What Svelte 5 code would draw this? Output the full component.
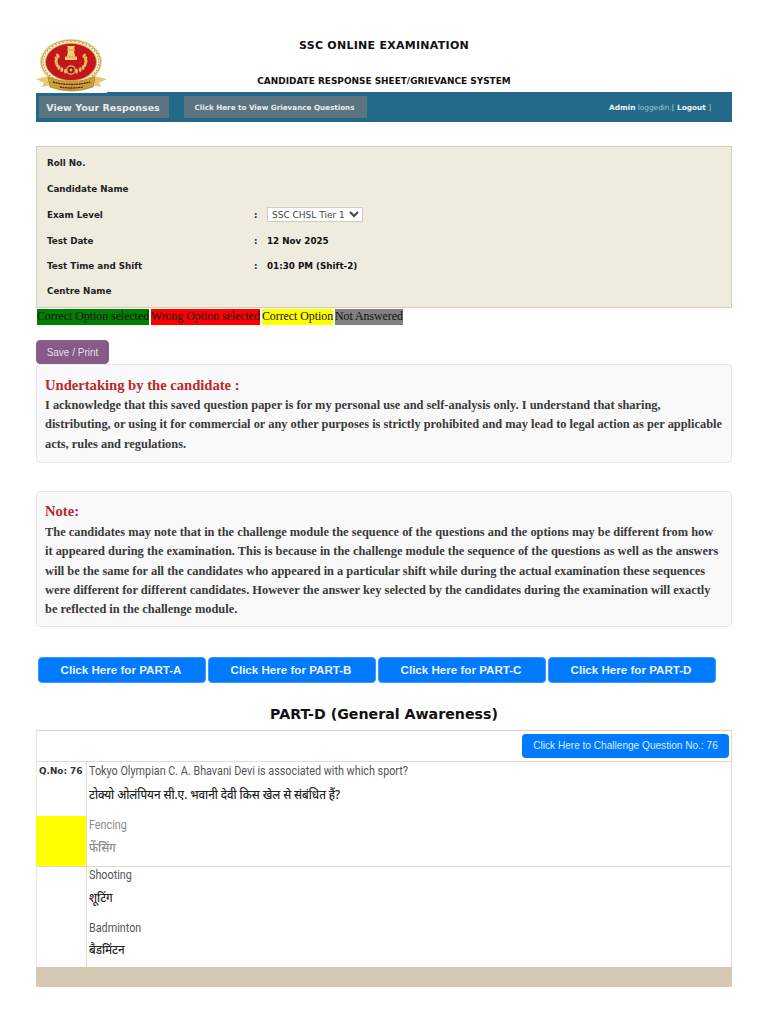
<script>
  const rows = [
    { label: 'Roll No.' },
    { label: 'Candidate Name' },
    { label: 'Exam Level', select: 'SSC CHSL Tier 1' },
    { label: 'Test Date', value: '12 Nov 2025' },
    { label: 'Test Time and Shift', value: '01:30 PM (Shift-2)' },
    { label: 'Centre Name' }
  ];
  const parts = ['A', 'B', 'C', 'D'];
  const dots = Array.from({ length: 44 }, (_, i) => {
    const a = (i / 44) * Math.PI * 2;
    return { x: 35 + Math.cos(a) * 28, y: 24 + Math.sin(a) * 20.5 };
  });
  const leaves = Array.from({ length: 7 }, (_, i) => {
    const a = Math.PI * (0.62 + i * 0.09);
    return { x: Math.cos(a) * 15, y: Math.sin(-a) * -11 };
  });
</script>

<div class="page">
  <header class="head">
    <svg class="logo" viewBox="0 0 71 55" aria-hidden="true">
      <ellipse cx="35" cy="24" rx="31" ry="23" fill="#ecd98f" />
      <ellipse cx="35" cy="24" rx="29.5" ry="21.8" fill="#f4ecc4" stroke="#b58a2c" stroke-width=".7" />
      {#each dots as d}
        <circle cx={d.x} cy={d.y} r=".55" fill="#8a6a24" />
      {/each}
      <ellipse cx="35" cy="24" rx="25.5" ry="18.6" fill="#c5161d" stroke="#d9a93f" stroke-width=".8" />
      <path d="M31 8h8l-1 2 1 2-1 1 1 5 2 1v3H29v-3l2-1 1-5-1-1 1-2z" fill="#f0cf73" />
      <path d="M31 12h8M30 19h10" stroke="#b98a2a" stroke-width=".6" fill="none" />
      {#each leaves as l}
        <ellipse cx={35 + l.x} cy={23 + l.y} rx="1.5" ry="2.4" fill="#e5bd5b" transform="rotate({-20 + l.y * 2} {35 + l.x} {23 + l.y})" />
        <ellipse cx={35 - l.x} cy={23 + l.y} rx="1.5" ry="2.4" fill="#e5bd5b" transform="rotate({20 - l.y * 2} {35 - l.x} {23 + l.y})" />
      {/each}
      <circle cx="35" cy="32" r="4.2" fill="#a5131a" stroke="#e5bd5b" stroke-width="1.2" />
      <circle cx="35" cy="32" r="1.4" fill="#e5bd5b" />
      <path d="M0 41l13-3 3 9-10 2 2-4zM71 41l-13-3-3 9 10 2-2-4z" fill="#e6c873" />
      <path d="M12 39q23 9 47 0l-2 10q-22 8-43 0z" fill="#c99f3c" stroke="#9c7420" stroke-width=".6" />
      <path d="M17 44q18 5 37 0M24 49q11 2 23 0" fill="none" stroke="#5e2417" stroke-width="1.3" stroke-dasharray="2 .6" />
    </svg>
    <h1>SSC ONLINE EXAMINATION</h1>
    <h2>CANDIDATE RESPONSE SHEET/GRIEVANCE SYSTEM</h2>
  </header>

  <nav class="bar">
    <span class="tab big">View Your Responses</span>
    <span class="tab small">Click Here to View Grievance Questions</span>
    <span class="user"><b>Admin</b> loggedin.[ <b>Logout</b> ]</span>
  </nav>

  <section class="info">
    {#each rows as r}
      <div class="row" class:tall={r.select}>
        <span class="lab">{r.label}</span>
        {#if r.select}
          <span class="colon">:</span>
          <select class="sel"><option>{r.select}</option></select>
        {:else if r.value}
          <span class="colon">:</span>
          <span class="val">{r.value}</span>
        {/if}
      </div>
    {/each}
  </section>

  <div class="legend">
    <span class="green">Correct Option selected</span>
    <span class="red">Wrong Option selected</span>
    <span class="yellow">Correct Option</span>
    <span class="grey">Not Answered</span>
  </div>

  <button class="save">Save / Print</button>

  <section class="well first">
    <h3>Undertaking by the candidate :</h3>
    <p>I acknowledge that this saved question paper is for my personal use and self-analysis only. I understand that sharing, distributing, or using it for commercial or any other purposes is strictly prohibited and may lead to legal action as per applicable acts, rules and regulations.</p>
  </section>

  <section class="well second">
    <h3>Note:</h3>
    <p>The candidates may note that in the challenge module the sequence of the questions and the options may be different from how it appeared during the examination. This is because in the challenge module the sequence of the questions as well as the answers will be the same for all the candidates who appeared in a particular shift while during the actual examination these sequences were different for different candidates. However the answer key selected by the candidates during the examination will exactly be reflected in the challenge module.</p>
  </section>

  <div class="parts">
    {#each parts as p}
      <button class="part">Click Here for PART-{p}</button>
    {/each}
  </div>

  <h2 class="title">PART-D (General Awareness)</h2>

  <section class="qtable">
    <div class="challenge"><button class="cbtn">Click Here to Challenge Question No.: 76</button></div>
    <div class="qrow q">
      <div class="side qno">Q.No: 76</div>
      <div class="cell">
        <div class="en">Tokyo Olympian C. A. Bhavani Devi is associated with which sport?</div>
        <div class="hi">टोक्यो ओलंपियन सी.ए. भवानी देवी किस खेल से संबंधित हैं?</div>
      </div>
    </div>
    <div class="qrow opt1">
      <div class="side mark"></div>
      <div class="cell muted">
        <div class="en">Fencing</div>
        <div class="hi">फेंसिंग</div>
      </div>
    </div>
    <div class="qrow opt2">
      <div class="side"></div>
      <div class="cell">
        <div class="en">Shooting</div>
        <div class="hi">शूटिंग</div>
        <div class="en gap">Badminton</div>
        <div class="hi">बैडमिंटन</div>
      </div>
    </div>
    <div class="foot"></div>
  </section>
</div>

<style>
  :global(body) { margin: 0; background: #fff; }
  .page { width: 696px; margin-left: 36px; padding-top: 38px; height: 986px; font-family: "DejaVu Sans", sans-serif; color: #111; position: relative; }

  .head { height: 54px; position: relative; text-align: center; }
  .logo { position: absolute; left: 0; top: 0; width: 71px; height: 55px; background: #fff; z-index: 1; }
  .head h1 { margin: 0; padding-top: 1px; font-size: 11px; line-height: 14px; font-weight: 700; letter-spacing: .27px; }
  .head h2 { margin: 22px 0 0; font-size: 8.95px; line-height: 12px; font-weight: 700; }

  .bar { height: 30px; background: #236a8a; display: flex; align-items: center; padding: 0 3px; box-sizing: border-box; }
  .tab { background: #5c7480; color: #e6ecef; font-weight: 700; display: flex; align-items: center; height: 22px; box-sizing: border-box; }
  .big { width: 130px; justify-content: center; font-size: 9.5px; padding-right: 2px; }
  .small { width: 183px; justify-content: center; font-size: 7.2px; margin-left: 15px; padding-right: 2px; }
  .user { margin-left: auto; margin-right: 18px; font-size: 7.35px; color: #a9c4d0; }
  .user b { color: #f2f6f8; }

  .info { margin-top: 24px; height: 162px; background: #f0ebdf; border: 1px solid #d8cdb8; box-sizing: border-box; padding: 3px 10px; font-size: 8.75px; font-weight: 700; color: #222; }
  .row { height: 25px; display: flex; align-items: center; }
  .row:first-child { height: 26px; }
  .row.tall { height: 27px; }
  .lab { width: 207px; }
  .colon { width: 13px; }
  .val { color: #111; }
  .sel { width: 96px; height: 15px; font: 400 9px "DejaVu Sans", sans-serif; color: #444; background: #fff; border: 1px solid #ccc; padding: 0; }

  .legend { display: flex; gap: 2px; padding-left: 1px; height: 16px; margin-top: 1px; font: 11.8px/15px "Liberation Serif", serif; color: #111; }
  .green { background: #008000; } .red { background: #ff0000; } .yellow { background: #ffff00; } .grey { background: #808080; }

  .save { display: block; margin: 15px 0 0; width: 73px; height: 24px; padding: 0; border: 1px solid #8b5f8b; border-radius: 4px; background: #875a88; color: #e9dfe9; font: 10px "Liberation Sans", sans-serif; }

  .well { background: #f9f9f9; border: 1px solid #e6e6e6; border-radius: 4px; box-sizing: border-box; padding: 0 8px; font-family: "Liberation Serif", serif; }
  .well h3 { margin: 0; color: #b52a2a; font-size: 14.6px; font-weight: 700; line-height: 18px; }
  .well p { margin: 0; color: #3a3a3a; font-size: 12.38px; font-weight: 700; line-height: 19.3px; }
  .first { margin-top: 0; height: 99px; padding-top: 11px; }
  .first h3 { margin-bottom: 2px; }
  .second { margin-top: 28px; height: 136px; padding-top: 10px; }
  .second h3 { margin-bottom: 3px; }

  .parts { display: flex; gap: 2px; margin-top: 30px; padding-left: 2px; }
  .part { width: 168px; height: 26px; border: 1px solid #3f95ff; border-radius: 4px; background: #007bff; color: #eaf3ff; font: 700 11.6px "Liberation Sans", sans-serif; padding: 0 2px 2px 0; }

  .title { margin: 22px 0 0; text-align: center; font-size: 14.2px; line-height: 18px; font-weight: 700; color: #111; }

  .qtable { margin-top: 7px; border-left: 1px solid #eee8da; border-right: 1px solid #e2dac8; border-top: 1px solid #dcd3bf; font-family: Roboto, "Noto Sans", sans-serif; color: #444; }
  .challenge { height: 30px; border-bottom: 1px solid #e2dac8; display: flex; justify-content: flex-end; align-items: center; padding-right: 2px; }
  .cbtn { width: 207px; height: 24px; border: 0; border-radius: 4px; background: #007bff; color: #dcebff; font: 10.1px "Liberation Sans", sans-serif; padding: 0 0 1px; }
  .qrow { display: flex; }
  .side { width: 50px; flex: none; border-right: 1px solid #e2dac8; box-sizing: border-box; }
  .qno { font: 700 8.9px/14px "DejaVu Sans", sans-serif; color: #333; padding: 2px 0 0 2px; white-space: nowrap; }
  .mark { background: #ffff00; margin-left: -1px; width: 51px; }
  .cell { flex: 1; padding-left: 2px; }
  .en, .hi { transform-origin: left center; white-space: nowrap; }
  .en { transform: scaleX(.9); font-size: 12px; line-height: 16px; color: #555; }
  .hi { transform: scaleX(.882); font-family: "Noto Sans", "Noto Sans CJK SC", "Liberation Sans", sans-serif; font-size: 13px; line-height: 22px; font-weight: 500; color: #222; }
  .q { height: 54px; }
  .q .en { padding-top: 1px; }
  .q .hi { margin-top: 4px; }
  .opt1 { height: 50px; border-bottom: 1px solid #e2dac8; }
  .opt1 .en { padding-top: 1px; }
  .opt1 .hi { margin-top: 3px; }
  .muted .en, .muted .hi { color: #8a8a8a; }
  .opt2 { height: 100px; }
  .opt2 .hi { margin-top: 3px; }
  .opt2 .gap + .hi { margin-top: 2px; }
  .gap { margin-top: 12px; }
  .foot { height: 20px; background: #d4c8b2; margin: 0 -1px; }
</style>
